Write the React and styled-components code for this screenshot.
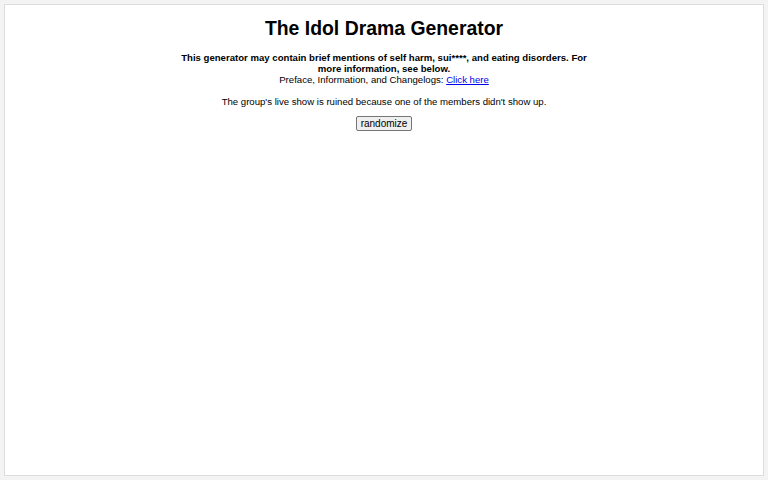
import React, { useState } from "react";
import styled, { createGlobalStyle } from "styled-components";

const GlobalStyle = createGlobalStyle`
  html, body {
    margin: 0;
    padding: 0;
    background: #f3f3f3;
  }
  body {
    font-family: "Liberation Sans", Arial, sans-serif;
  }
`;

const Frame = styled.div`
  box-sizing: border-box;
  margin: 4px;
  height: 472px;
  background: #fff;
  border: 1px solid #dcdcdc;
  text-align: center;
  color: #000;
`;

const Title = styled.h1`
  margin: 0;
  padding-top: 10px;
  font-size: 19.4px;
  font-weight: 700;
  line-height: 26px;
`;

const Warning = styled.p`
  margin: 11px auto 0;
  width: 412px;
  font-size: 9.6px;
  font-weight: 700;
  line-height: 11px;
`;

const Info = styled.p`
  margin: 0;
  font-size: 9.6px;
  line-height: 11px;
  a {
    color: #0000ee;
  }
`;

const Result = styled.p`
  margin: 11px 0 0;
  font-size: 9.6px;
  line-height: 11px;
`;

const Button = styled.button`
  margin-top: 9px;
  font-family: "Liberation Sans", Arial, sans-serif;
  font-size: 10px;
  padding: 1px 4px;
  border: 1px solid #767676;
  border-radius: 2px;
  background: #efefef;
  color: #000;
`;

const prompts = [
  "The group's live show is ruined because one of the members didn't show up.",
];

export default function App() {
  const [line, setLine] = useState(prompts[0]);
  return (
    <>
      <GlobalStyle />
      <Frame>
        <Title>The Idol Drama Generator</Title>
        <Warning>
          This generator may contain brief mentions of self harm, sui****, and
          eating disorders. For more information, see below.
        </Warning>
        <Info>
          Preface, Information, and Changelogs: <a href="#">Click here</a>
        </Info>
        <Result>{line}</Result>
        <Button onClick={() => setLine(prompts[Math.floor(Math.random() * prompts.length)])}>
          randomize
        </Button>
      </Frame>
    </>
  );
}
